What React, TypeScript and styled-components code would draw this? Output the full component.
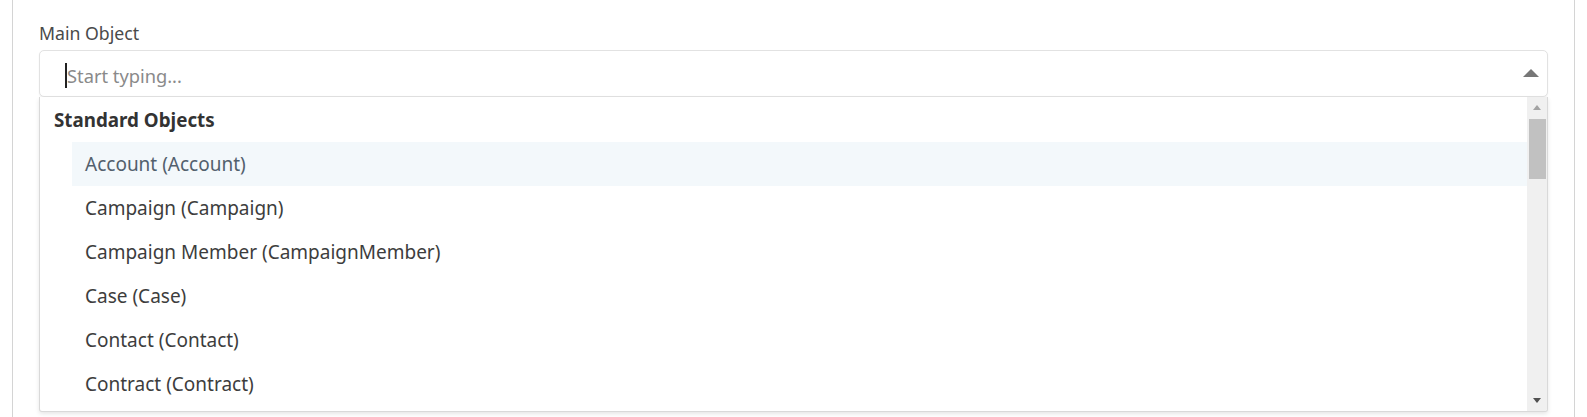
import styled, { createGlobalStyle } from "styled-components";

const GlobalStyle = createGlobalStyle`
  html, body {
    margin: 0;
    padding: 0;
    background: #ffffff;
    overflow: hidden;
  }
  * {
    box-sizing: border-box;
  }
`;

const options = [
  "Account (Account)",
  "Campaign (Campaign)",
  "Campaign Member (CampaignMember)",
  "Case (Case)",
  "Contact (Contact)",
  "Contract (Contract)",
];

export default function App() {
  return (
    <>
      <GlobalStyle />
      <Panel>
        <Label>Main Object</Label>
        <Field>
          <Caret />
          <Placeholder>Start typing...</Placeholder>
          <ToggleArrow />
        </Field>
        <Dropdown>
          <List>
            <GroupTitle>Standard Objects</GroupTitle>
            {options.map((item, i) => (
              <Option key={item} $active={i === 0}>
                {item}
              </Option>
            ))}
          </List>
          <Scrollbar>
            <ScrollButton>
              <ScrollArrow $up />
            </ScrollButton>
            <Thumb />
            <Track />
            <ScrollButton>
              <ScrollArrow />
            </ScrollButton>
          </Scrollbar>
        </Dropdown>
      </Panel>
    </>
  );
}

const Panel = styled.div`
  margin-left: 12px;
  width: 1563px;
  height: 100vh;
  padding: 21px 26px 0 26px;
  border-left: 1px solid #d4d4d4;
  border-right: 1px solid #d4d4d4;
  font-family: "Noto Sans", "Open Sans", sans-serif;
  overflow: hidden;
`;

const Label = styled.div`
  font-size: 17.7px;
  line-height: 24px;
  color: #4a4a4a;
  margin-bottom: 5px;
`;

const Field = styled.div`
  height: 47px;
  display: flex;
  align-items: center;
  padding: 4px 8px 0 25px;
  border: 1px solid #e2e2e2;
  border-radius: 5px;
  box-shadow: 0 1px 2px rgba(0, 0, 0, 0.06);
  background: #ffffff;
`;

const Caret = styled.span`
  width: 2px;
  height: 25px;
  background: #222222;
`;

const Placeholder = styled.span`
  font-size: 18.3px;
  line-height: 25px;
  color: #8a8a8a;
`;

const ToggleArrow = styled.span`
  margin-left: auto;
  margin-bottom: 5px;
  width: 0;
  height: 0;
  border-left: 8px solid transparent;
  border-right: 8px solid transparent;
  border-bottom: 8px solid #777777;
`;

const Dropdown = styled.div`
  height: 315px;
  display: flex;
  border: 1px solid #d9d9d9;
  border-top: none;
  border-radius: 0 0 3px 3px;
  box-shadow: 0 2px 4px rgba(0, 0, 0, 0.1);
  background: #ffffff;
  overflow: hidden;
`;

const List = styled.div`
  flex: 1;
  overflow: hidden;
`;

const GroupTitle = styled.div`
  height: 45px;
  padding: 2px 0 0 14px;
  font-size: 18.8px;
  line-height: 43px;
  font-weight: 700;
  color: #333333;
`;

const Option = styled.div<{ $active?: boolean }>`
  margin-left: 32px;
  height: 44px;
  padding-left: 13px;
  font-size: 19px;
  line-height: 44px;
  white-space: nowrap;
  color: ${(p) => (p.$active ? "#52606d" : "#3d3d3d")};
  background: ${(p) => (p.$active ? "#f3f8fb" : "transparent")};
`;

const Scrollbar = styled.div`
  width: 20px;
  display: flex;
  flex-direction: column;
  background: #f0f0f0;
`;

const ScrollButton = styled.div`
  height: 21px;
  display: flex;
  align-items: center;
  justify-content: center;
`;

const ScrollArrow = styled.span<{ $up?: boolean }>`
  width: 0;
  height: 0;
  border-left: 4.5px solid transparent;
  border-right: 4.5px solid transparent;
  ${(p) =>
    p.$up
      ? "border-bottom: 5px solid #a3a3a3;"
      : "border-top: 5px solid #505050;"}
`;

const Thumb = styled.div`
  height: 60px;
  margin: 1px 1px 0 2px;
  background: #c1c1c1;
`;

const Track = styled.div`
  flex: 1;
`;
